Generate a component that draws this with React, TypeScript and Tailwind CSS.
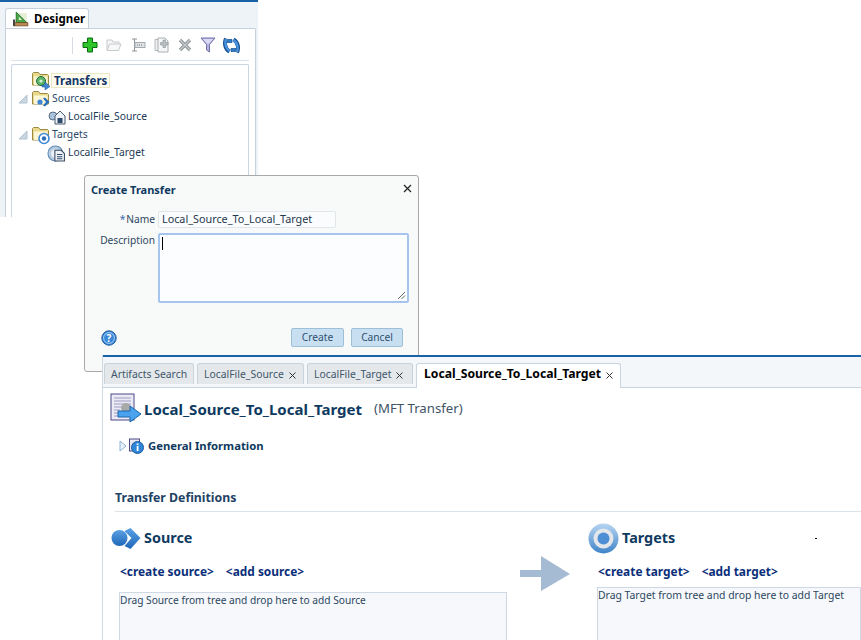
import React from "react";

const F = "font-['Noto_Sans','DejaVu_Sans',sans-serif]";

function Folder({ children }: { children?: React.ReactNode }) {
  return (
    <svg width="20" height="19" viewBox="0 0 20 19" className="shrink-0">
      <path d="M1.5 14V2.5L2.5 1.5h5l1.5 2h7.5l1 1V14z" fill="#e9d98c" stroke="#9a8a45" />
      <path d="M3 5.5h13.5V14H3z" fill="#fbf6d8" />
      {children}
    </svg>
  );
}

function Plus() {
  return (
    <svg width="16" height="16" viewBox="0 0 16 16">
      <path d="M5.5 1h5v4.5H15v5h-4.5V15h-5v-4.5H1v-5h4.5z" fill="#2fc42a" stroke="#0b6b12" />
    </svg>
  );
}
function Open() {
  return (
    <svg width="16" height="14" viewBox="0 0 16 14" fill="#f7f8f8" stroke="#c5c9cc">
      <path d="M1 12V2h5l1 2h6v2" />
      <path d="M1 12.5 3.5 6H15l-2.5 6.5z" />
    </svg>
  );
}
function Rename() {
  return (
    <svg width="16" height="14" viewBox="0 0 16 14" fill="none">
      <path d="M2 1h5M2 13h5M4.5 1v12" stroke="#8d9499" />
      <rect x="5" y="4.5" width="10" height="5" fill="#dfe3e5" stroke="#a4abb0" />
      <path d="M7 7h1M9 7h1M11 7h1" stroke="#777" />
    </svg>
  );
}
function Paste() {
  return (
    <svg width="16" height="16" viewBox="0 0 16 16">
      <path d="M1 2.5h8v11H1z" fill="#eef0f1" stroke="#b5babd" />
      <path d="M4 1h7l3 3v11H4z" fill="#f5f6f6" stroke="#aab0b4" />
      <path d="M9 3h2.5v2.5H14V8h-2.5v2.5H9V8H6.5V5.5H9z" fill="#b9bec2" stroke="#8f9599" strokeWidth="0.6" />
    </svg>
  );
}
function Del() {
  return (
    <svg width="14" height="14" viewBox="0 0 14 14">
      <path d="M2 2l10 10M12 2 2 12" stroke="#8f9599" strokeWidth="3.4" />
      <path d="M2 2l10 10M12 2 2 12" stroke="#c4c8ca" strokeWidth="1.4" />
    </svg>
  );
}
function Filter() {
  return (
    <svg width="16" height="16" viewBox="0 0 16 16">
      <path d="M1 1h14L9.5 7.5V15l-3-2V7.5z" fill="#b9b4e2" stroke="#6d72a8" />
      <path d="M3 2h10L9 6.5H7z" fill="#dcdaf3" />
    </svg>
  );
}
function Refresh() {
  return (
    <svg width="17" height="17" viewBox="0 0 17 17" className="-ml-[1px]" fill="none">
      <path d="M3 1.500C1 6 2 12 6.500 14.500" stroke="#16508f" strokeWidth="4" />
      <path d="M3 2C1.500 6 2.500 11.500 6.500 14" stroke="#4a94e0" strokeWidth="2.400" />
      <path d="M4 5.500h5v-3H5z" fill="#2f7cc9" stroke="#16508f" strokeWidth="0.7" />
      <path d="M14 15.500C16 11 15 5 10.500 2.500" stroke="#16508f" strokeWidth="4" />
      <path d="M14 15C15.500 11 14.500 5.500 10.500 3" stroke="#4a94e0" strokeWidth="2.400" />
      <path d="M13 11.500H8v3h4z" fill="#2f7cc9" stroke="#16508f" strokeWidth="0.7" />
    </svg>
  );
}

function SmallArrow() {
  return (
    <svg width="10" height="10" viewBox="0 0 10 10" className="shrink-0">
      <path d="M9 1v8H1z" fill="#c9d6e2" stroke="#b4c4d2" />
    </svg>
  );
}

function TreeRow({ arrow, indent, icon, label }: { arrow?: boolean; indent: string; icon: React.ReactNode; label: React.ReactNode }) {
  return (
    <div className={`flex h-[18px] items-center ${indent}`}>
      {arrow ? <span className="flex w-[13px] shrink-0"><SmallArrow /></span> : null}
      {icon}
      {label}
    </div>
  );
}

function Designer() {
  return (
    <section className={`absolute left-0 top-0 flex h-[217px] w-[258px] flex-col bg-[#eef3f7] pl-[5px] pr-[2px] ${F}`}>
      <div className="h-[2px] -ml-[5px] -mr-[2px] bg-[#1a62a8]" />
      <div className="mt-[6px] flex h-[21px] w-[84px] items-center gap-[5px] rounded-t-[3px] border border-b-0 border-[#c5d1dc] bg-white pl-[7px] text-[11.5px] font-bold text-black">
        <svg width="16" height="16" viewBox="0 0 15 15" className="shrink-0">
          <path d="M3 2v9l10 0V2z" fill="#e4efd6" />
          <path d="M3 1v10h10L3 1z" fill="#4aa544" stroke="#1f6d2a" strokeWidth="0.8" />
          <path d="M5.5 5.5v3h3z" fill="#e6f3da" />
          <rect x="1" y="11" width="13" height="3" fill="#b98a55" stroke="#6b3f1c" strokeWidth="0.6" />
          <rect x="0" y="8" width="2" height="6" fill="#444" />
        </svg>
        Designer
      </div>
      <div className="flex min-h-0 flex-1 flex-col rounded-t-[2px] border border-b-0 border-[#c5d1dc] bg-white pl-[5px] pr-[6px] -mt-[1px]">
        <div className="flex h-[32px] items-center border-b border-[#dce3e8] pt-[1px]">
          <div className="ml-[61px] mr-[9px] h-[17px] w-px bg-[#d5dbe0]" />
          <div className="flex items-center gap-[8px]">
            <Plus />
            <Open />
            <Rename />
            <Paste />
            <Del />
            <Filter />
            <Refresh />
          </div>
        </div>
        <div className="mt-[3px] flex-1 rounded-t-[2px] border border-b-0 border-[#c9d5e0] pt-[6px] text-[10.3px] text-[#1d3a56]">
          <div className="mb-[1px]">
            <TreeRow
              indent="pl-[19px]"
              icon={
                <Folder>
                  <circle cx="10" cy="10" r="4.5" fill="#5cb56a" stroke="#1f6d3a" />
                  <circle cx="10" cy="10" r="1.6" fill="#d7efd9" />
                  <path d="M11 14h3v-3l5 4.500-5 3.500v-3h-3z" fill="#3f87d6" stroke="#16508f" strokeWidth="0.5" />
                </Folder>
              }
              label={<span className="border border-[#ebe7c9] bg-[#fdfcef] px-[2px] text-[11.5px] font-bold leading-[13px] text-[#13366b]">Transfers</span>}
            />
          </div>
          <TreeRow
            arrow
            indent="pl-[6px]"
            icon={
              <Folder>
                <circle cx="9" cy="12" r="2.6" fill="#3f87d6" />
                <path d="M14 7.500l4.500 4.500-4.500 4.500-2-1 3-3.500-3-3.500z" fill="#2b6fbc" />
              </Folder>
            }
            label={<span className="ml-[1px] text-[#2b4a68]">Sources</span>}
          />
          <TreeRow
            indent="pl-[35px]"
            icon={
              <svg width="20" height="16" viewBox="0 0 18 16" className="shrink-0">
                <circle cx="5" cy="7" r="4" fill="#a9c3de" stroke="#5b6f85" />
                <path d="M7 7l5-5 5 5v8H7z" fill="#eef2f6" stroke="#4a5b6e" />
                <rect x="9.500" y="9" width="5" height="5" fill="#2f4a6d" />
              </svg>
            }
            label={<span className="ml-[1px]">LocalFile_Source</span>}
          />
          <TreeRow
            arrow
            indent="pl-[6px]"
            icon={
              <Folder>
                <circle cx="13" cy="12.500" r="5" fill="#fff" stroke="#3f87d6" strokeWidth="1.600" />
                <circle cx="13" cy="12.500" r="2.200" fill="#2b6fbc" />
              </Folder>
            }
            label={<span className="ml-[1px] text-[#2b4a68]">Targets</span>}
          />
          <TreeRow
            indent="pl-[35px]"
            icon={
              <svg width="20" height="17" viewBox="0 0 18 16" className="shrink-0">
                <circle cx="7.500" cy="8" r="7" fill="#b7cde4" stroke="#5f88b0" />
                <circle cx="7.500" cy="8" r="4" fill="#eef2f6" />
                <path d="M7 5h6l3 3v7H7z" fill="#eef2f6" stroke="#3a4a60" />
                <path d="M9 9h5M9 11h5M9 13h5" stroke="#2f4a6d" />
              </svg>
            }
            label={<span className="ml-[1px]">LocalFile_Target</span>}
          />
        </div>
      </div>
    </section>
  );
}

function Dialog() {
  return (
    <section className={`absolute left-[84px] top-[175px] h-[197px] w-[335px] rounded-[3px] border border-[#a9a9a9] bg-[#f8f9f9] ${F}`}>
      <div className="flex h-[26px] items-start justify-between pl-[6px] pr-[6px] pt-[6px] text-[11px] font-bold leading-[15px] text-[#0f3a5f]">
        <span>Create Transfer</span>
        <svg width="9" height="9" viewBox="0 0 9 9" className="mt-[2px]"><path d="M1 1l7 7M8 1 1 8" stroke="#222" strokeWidth="1.200" /></svg>
      </div>
      <div className="mt-[9px] grid grid-cols-[70px_1fr] gap-x-[3px] gap-y-[5px] text-[10.2px] text-[#2c4660]">
        <div className="flex h-[17px] items-center justify-end"><span className="mr-[1px] text-[#3a6ea8]">*</span>Name</div>
        <div className="flex h-[17px] w-[178px] items-center rounded-[2px] border border-[#e1e6ea] bg-[#fbfcfd] pl-[2px] text-[10.8px] text-[#25384c]"><span className="ml-[1px]">Local_Source_To_Local_Target</span></div>
        <div className="flex h-[15px] items-center justify-end">Description</div>
        <div className="relative h-[70px] w-[251px] rounded-[2px] border-2 border-[#a5c4ee] bg-[#fbfdff]">
          <div className="ml-[2px] mt-[2px] h-[13px] w-px bg-black" />
          <svg width="9" height="9" viewBox="0 0 9 9" className="absolute bottom-[1px] right-[1px]"><path d="M1 8l7-7M4.500 8 8 4.500" stroke="#666" /></svg>
        </div>
      </div>
      <div className="mt-[25px] flex items-center justify-between pl-[16px] pr-[15px]">
        <svg width="16" height="16" viewBox="0 0 16 16">
          <circle cx="8" cy="8" r="7.200" fill="#3a86d8" stroke="#1d5a9e" />
          <circle cx="8" cy="8" r="5.400" fill="none" stroke="#a6d0f5" />
          <text x="8" y="11.500" textAnchor="middle" fontSize="10" fontWeight="700" fill="#fff" fontFamily="Noto Sans, sans-serif">?</text>
        </svg>
        <div className="flex gap-[7px] text-[10.2px] text-[#2f4f6e]">
          <div className="flex h-[19px] w-[53px] items-center justify-center rounded-[2px] border border-[#9ebfd8] bg-[#c8dff2]">Create</div>
          <div className="flex h-[19px] w-[52px] items-center justify-center rounded-[2px] border border-[#9ebfd8] bg-[#c8dff2]">Cancel</div>
        </div>
      </div>
    </section>
  );
}

function Tab({ label, close, w, active }: { label: string; close?: boolean; w: string; active?: boolean }) {
  return (
    <div
      className={`flex ${w} items-center gap-[5px] rounded-t-[3px] border border-b-0 ${
        active ? "h-[25px] self-end border-[#c9d5e0] bg-white pb-[3px] pl-[7px] text-[12.2px] font-bold text-black" : "mb-[3px] h-[21px] border-[#c9d3db] bg-[#e4e8eb] pl-[6px] pt-[1px] text-[10.4px] text-[#41566a]"
      }`}
    >
      <span>{label}</span>
      {close ? (
        <svg width="7" height="7" viewBox="0 0 7 7" className="mt-[2px] shrink-0"><path d="M.5.5l6 6M6.5.5l-6 6" stroke="#333" /></svg>
      ) : null}
    </div>
  );
}

function DropBox({ text, cls }: { text: string; cls: string }) {
  return (
    <div className={`${cls} border border-b-0 border-[#cfd9e6] bg-[#f6f8fc] leading-[14px] text-[#2c4660]`}>{text}</div>
  );
}

function Main() {
  return (
    <section className={`absolute left-[102px] top-[355px] flex h-[285px] w-[759px] flex-col overflow-hidden border-l border-[#cfd9e2] bg-[#f4f7f9] ${F}`}>
      <div className="h-[2px] shrink-0 bg-[#1a62a8]" />
      <div className="flex h-[31px] shrink-0 items-end gap-[3px] border-b border-[#c9d5e0] pl-[1px]">
        <Tab label="Artifacts Search" w="w-[90px]" />
        <Tab label="LocalFile_Source" close w="w-[107px]" />
        <Tab label="LocalFile_Target" close w="w-[106px]" />
        <Tab label="Local_Source_To_Local_Target" close w="w-[205px] -mb-px" active />
      </div>
      <div className="flex min-h-0 flex-1 flex-col bg-white">
        <div className="flex h-[41px] shrink-0 items-center pl-[7px] pt-[1px]">
          <svg width="32" height="32" viewBox="0 0 32 32" className="shrink-0">
            <rect x="1" y="1" width="23" height="26" fill="#eceaf5" stroke="#4b4a85" />
            <path d="M4 5h17M4 8h17M4 11h17M4 14h8M4 17h6M4 20h6M4 23h8" stroke="#9c9cc2" />
            <circle cx="16" cy="15" r="5" fill="#a9a9a9" />
            <path d="M8 18h12v-5l11 8-11 8v-5H8z" fill="#4aa3ee" stroke="#1d65aa" />
          </svg>
          <span className="ml-[2px] text-[15px] font-bold text-[#0f3a5f]">Local_Source_To_Local_Target</span>
          <span className="ml-[12px] text-[13.2px] text-[#3e5467]">(MFT Transfer)</span>
        </div>
        <div className="mt-[7px] flex h-[20px] shrink-0 items-center pl-[16px] text-[11.3px] font-bold text-[#0f3a5f]">
          <svg width="8" height="12" viewBox="0 0 8 12" className="mr-[2px]"><path d="M1 1l6 5-6 5z" fill="#eef4fb" stroke="#8fb0d4" /></svg>
          <svg width="15" height="16" viewBox="0 0 15 16" className="mr-[4px]">
            <rect x="0.500" y="1" width="10" height="12" fill="#e8e8f3" stroke="#4b4a85" />
            <circle cx="8.500" cy="9.500" r="6" fill="#2f86d8" stroke="#1d5a9e" />
            <rect x="7.700" y="8" width="1.800" height="5" fill="#fff" /><rect x="7.700" y="5.500" width="1.800" height="1.600" fill="#fff" />
          </svg>
          General Information
        </div>
        <div className="mt-[33px] ml-[12px] h-[23px] shrink-0 border-b border-[#dce3e8] text-[12.3px] font-bold text-[#1f4364]">Transfer Definitions</div>
        <div className="flex shrink-0">
          <div className="w-[405px] shrink-0 pl-[7px]">
            <div className="mt-[11px] flex h-[30px] items-center text-[14.4px] font-bold text-[#0f3a5f]">
              <svg width="34" height="24" viewBox="0 0 33 24" className="shrink-0">
                <defs><linearGradient id="b1" x1="0" y1="0" x2="0" y2="1"><stop offset="0" stopColor="#5aa0e4" /><stop offset="1" stopColor="#1f68b8" /></linearGradient></defs>
                <circle cx="9" cy="12" r="8" fill="url(#b1)" />
                <path d="M20 2l10 10-10 11-6-3 7-8-7-7z" fill="url(#b1)" />
              </svg>
              Source
            </div>
            <div className="mt-[10px] flex gap-[12px] pl-[10px] text-[11.9px] font-bold text-[#0b2f7a]">
              <span>&lt;create source&gt;</span>
              <span>&lt;add source&gt;</span>
            </div>
            <div className="mt-[11px]"><DropBox text="Drag Source from tree and drop here to add Source" cls="ml-[9px] h-[60px] w-[388px] text-[10.2px]" /></div>
          </div>
          <div className="flex w-[80px] shrink-0 items-start pl-[12px] pt-[44px]">
            <svg width="50" height="36" viewBox="0 0 50 36"><path d="M0 14h21V0l29 18-29 17V21H0z" fill="#a5bad3" /></svg>
          </div>
          <div className="flex-1">
            <div className="mt-[11px] flex h-[30px] items-center text-[14.4px] font-bold text-[#0f3a5f]">
              <svg width="31" height="31" viewBox="0 0 31 31" className="mr-[3px] shrink-0">
                <defs><linearGradient id="b2" x1="0" y1="0" x2="0" y2="1"><stop offset="0" stopColor="#b8d6f2" /><stop offset="1" stopColor="#3f84c8" /></linearGradient></defs>
                <circle cx="15.500" cy="15.500" r="15" fill="url(#b2)" />
                <circle cx="15.500" cy="15.500" r="10" fill="#e3e6ea" />
                <circle cx="15.500" cy="15.500" r="6" fill="#4d8ed4" />
              </svg>
              Targets
              <span className="ml-[140px] h-[1px] w-[2px] bg-black" />
            </div>
            <div className="mt-[10px] flex gap-[12px] pl-[10px] text-[11.9px] font-bold text-[#0b2f7a]">
              <span>&lt;create target&gt;</span>
              <span>&lt;add target&gt;</span>
            </div>
            <div className="mt-[6px]"><DropBox text="Drag Target from tree and drop here to add Target" cls="ml-[9px] h-[65px] text-[10.4px]" /></div>
          </div>
        </div>
      </div>
    </section>
  );
}

export default function App() {
  return (
    <div className="relative h-[640px] w-[861px] overflow-hidden bg-white">
      <Designer />
      <Dialog />
      <Main />
    </div>
  );
}
